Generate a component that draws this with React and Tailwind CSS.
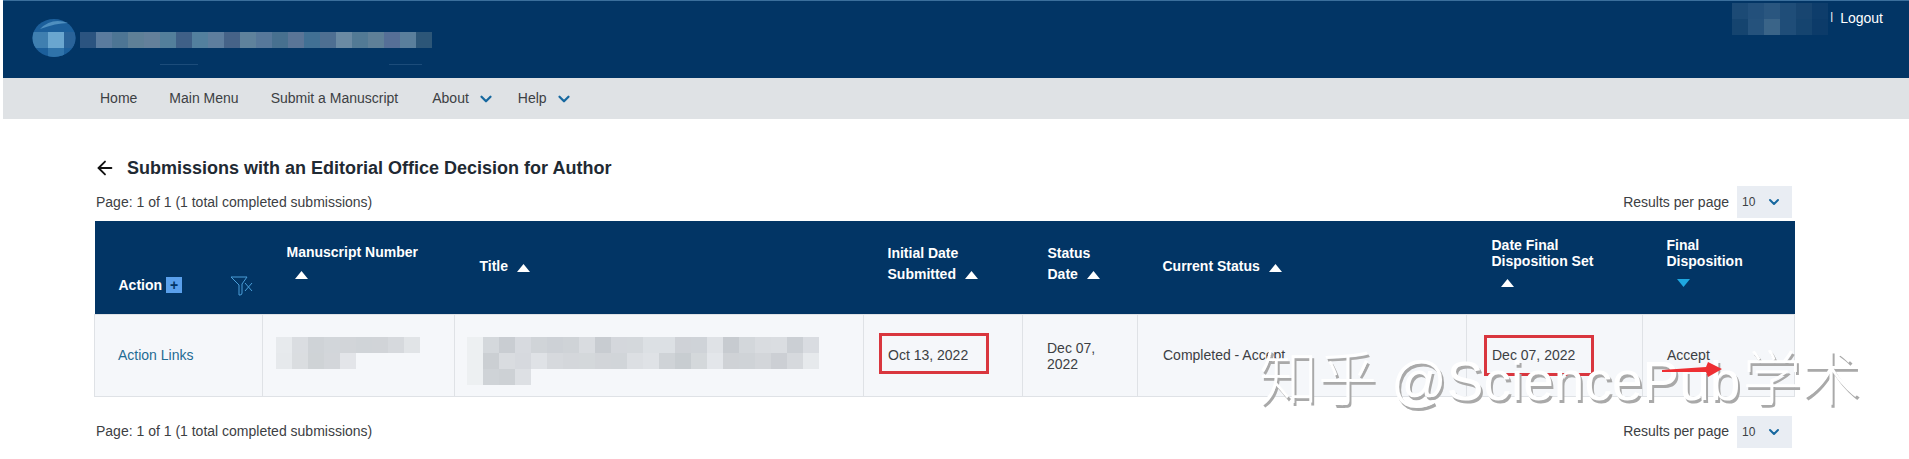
import { ArrowLeft, ChevronDown } from 'lucide-react';

const LOGO_BAR = ['#3f7fb0', '#6aa6cf', '#2a6399', '#2b5480', '#5a7b9e', '#4d7594', '#5f8097', '#64809a', '#537f9b', '#3f6087', '#53809e', '#5e7e9e', '#466388', '#5f829c', '#57789a', '#47708f', '#5a7597', '#417094', '#4e6f92', '#6a8aa3', '#527a95', '#5f8098', '#566f97', '#5a7f9c', '#2c5678'];
const USER_BLUR = [
  ['#1c4a75', '#23507b', '#2a567f', '#1f4d78', '#184570', '#0e3d6b'],
  ['#15446f', '#25527c', '#3a6488', '#1f4d78', '#15446f', '#0c3b69'],
];
const NUMBER_BLUR = [
  ['#e7eaed', '#dadde1', '#cfd3d7', '#d2d6da', '#d2d5d9', '#d0d4d8', '#d1d4d8', '#d6d9dd', '#e1e4e7'],
  ['#e6e9ec', '#dadde0', '#cfd3d6', '#d3d6da', '#e3e5e9'],
];
const TITLE_BLUR = [
  ['#edf0f2', '#d4d8dc', '#c9cdd2', '#d7dadf', '#d0d4d8', '#cdd1d6', '#cfd3d7', '#d9dce0', '#c8ccd1', '#d4d7dc', '#d4d8dc', '#dce0e4', '#dce0e4', '#cfd2d7', '#cfd3d8', '#dfe2e6', '#c7cbd0', '#d3d7db', '#d9dce0', '#dadde1', '#cbcfd4', '#d9dce1'],
  ['#edf0f2', '#cbcfd3', '#d9dce0', '#d6d9de', '#dfe2e6', '#d6d9dd', '#d4d7db', '#d4d8db', '#d2d5d9', '#d1d5d9', '#dcdfe3', '#dfe2e6', '#cfd3d7', '#c8cdd1', '#d4d8db', '#e3e6ea', '#cfd2d6', '#cfd3d7', '#d3d6da', '#cccfd4', '#d6d9dd', '#e6e9ec'],
  ['#edf0f2', '#cfd3d7', '#cdd1d5', '#dde0e4'],
];

// pixelated (censored) areas of the screenshot
function Mosaic({ rows, cell = 16 }) {
  const cols = Math.max(...rows.map((r) => r.length));
  return (
    <svg width={cols * cell} height={rows.length * cell} className="block">
      {rows.map((row, y) => row.map((c, x) => <rect key={x} x={x * cell} y={y * cell} width={cell} height={cell} fill={c} />))}
    </svg>
  );
}

function Logo() {
  return (
    <svg width="410" height="50" className="block">
      <defs>
        <clipPath id="globe"><ellipse cx="22" cy="19" rx="21.5" ry="19" /></clipPath>
      </defs>
      <ellipse cx="22" cy="19" rx="21.5" ry="19" fill="#1c5f9b" />
      <path d="M8 10 Q20 -2 36 4 Q24 4 8 10" fill="#4f8fbf" />
      <g clipPath="url(#globe)">
        <rect x="16" y="29" width="16" height="9" fill="#2f73aa" />
        {LOGO_BAR.slice(0, 3).map((c, i) => <rect key={i} x={i * 16} y="13" width="16" height="16" fill={c} />)}
      </g>
      {LOGO_BAR.slice(3).map((c, i) => <rect key={i} x={(i + 3) * 16} y="13" width="16" height="16" fill={c} />)}
      <rect x="128" y="45" width="38" height="1" fill="#1c4c7a" />
      <rect x="357" y="45" width="33" height="1" fill="#1c4c7a" />
    </svg>
  );
}

function Sort({ down }) {
  return (
    <svg width="13" height="8" viewBox="0 0 13 8" className="inline-block">
      {down
        ? <polygon points="0,0 13,0 6.5,8" fill="#1ea7e0" />
        : <polygon points="6.5,0 13,8 0,8" fill="#ffffff" />}
    </svg>
  );
}

function FilterClear() {
  return (
    <svg width="24" height="20" viewBox="0 0 24 20" fill="none" stroke="#4a9ed8" strokeWidth="1" className="block">
      <path d="M1 1 H17 L12 8 V17 Q12 19 10 19 H9 V9 Z" />
      <path d="M15 7 L22 15 M22 7 L15 15" />
    </svg>
  );
}

function PageRow() {
  return (
    <div className="flex items-center justify-between text-[14px] text-[#3c4043]">
      <span className="pl-[2px]">Page: 1 of 1 (1 total completed submissions)</span>
      <div className="flex items-center">
        <span>Results per page</span>
        <div className="ml-2 mr-[2px] flex h-8 w-[55px] items-center bg-[#e9edf3] pl-[5px]">
          <span className="text-[12px]">10</span>
          <ChevronDown size={16} strokeWidth={3} className="ml-[11px] text-[#17689f]" />
        </div>
      </div>
    </div>
  );
}

export default function App() {
  return (
    <div className="relative h-[459px] w-[1909px] overflow-hidden bg-white pl-[3px] font-['Liberation_Sans',sans-serif]">
      {/* Top banner */}
      <div className="flex h-[78px] items-start justify-between border-t border-[#3b6f9c] bg-[#023565]">
        <div className="ml-[29px] mt-[18px]"><Logo /></div>
        <div className="mr-[26px] mt-[2px] flex items-start text-[14px] text-white">
          <Mosaic rows={USER_BLUR} cell={16} />
          <span className="ml-[2px] mt-[5px] text-[11px]">|</span>
          <span className="ml-[7px] mt-[5px]">Logout</span>
        </div>
      </div>

      {/* Nav */}
      <div className="flex h-[41px] items-center bg-[#dfe2e5] pl-[97px] text-[14px] text-[#3c4043]">
        <span>Home</span>
        <span className="ml-8">Main Menu</span>
        <span className="ml-[32px]">Submit a Manuscript</span>
        <span className="ml-[34px]">About</span>
        <ChevronDown size={18} strokeWidth={3} className="ml-[8px] text-[#17689f]" />
        <span className="ml-[23px]">Help</span>
        <ChevronDown size={18} strokeWidth={3} className="ml-[8px] text-[#17689f]" />
      </div>

      {/* Content */}
      <div className="ml-[91px] w-[1700px]">
        <div className="mt-[38px] flex h-[22px] items-center">
          <ArrowLeft size={22} strokeWidth={2} className="text-[#111]" />
          <h1 className="ml-[11px] text-[18px] font-bold text-[#1f2a33]">Submissions with an Editorial Office Decision for Author</h1>
        </div>

        <div className="mt-[7px]"><PageRow /></div>

        <table className="mt-[3px] w-[1700px] table-fixed border-collapse text-[14px] text-[#3c4043]">
          <colgroup>
            <col className="w-[168px]" />
            <col className="w-[192px]" />
            <col className="w-[409px]" />
            <col className="w-[159px]" />
            <col className="w-[115px]" />
            <col className="w-[329px]" />
            <col className="w-[176px]" />
            <col className="w-[152px]" />
          </colgroup>
          <thead>
            <tr className="h-[93px] bg-[#023565] text-left text-[14px] font-bold text-white">
              <th className="pb-[18px] pl-6 align-bottom">
                <div className="flex items-end justify-between pr-[9px]">
                  <div className="flex items-center">
                    Action
                    <span className="ml-[4px] flex h-4 w-4 items-center justify-center bg-[#5aa0ec] text-[14px] leading-none text-[#023565]">+</span>
                  </div>
                  <FilterClear />
                </div>
              </th>
              <th className="pl-6 pb-[12px] align-middle">
                <div>Manuscript Number</div>
                <div className="mt-[3px] pl-[8px] leading-none"><Sort /></div>
              </th>
              <th className="pl-[25px] pb-[1px]">Title <span className="ml-[5px]"><Sort /></span></th>
              <th className="pl-[24px] pb-[7px] leading-[21px]">Initial Date<br />Submitted <span className="ml-[5px]"><Sort /></span></th>
              <th className="pl-[25px] pb-[7px] leading-[21px]">Status<br />Date <span className="ml-[5px]"><Sort /></span></th>
              <th className="pl-[25px] pb-[1px]">Current Status <span className="ml-[5px]"><Sort /></span></th>
              <th className="pl-[25px] pb-[9px] leading-[16px]">
                Date Final<br />Disposition Set
                <div className="mt-[6px] pl-[9px] leading-none"><Sort /></div>
              </th>
              <th className="pl-[24px] pb-[9px] leading-[16px]">
                Final<br />Disposition
                <div className="mt-[6px] pl-[10px] leading-none"><Sort down /></div>
              </th>
            </tr>
          </thead>
          <tbody>
            <tr className="h-[82px] bg-[#f5f7fa]">
              <td className="border border-[#dfe2e6] pl-[23px] text-[#1f6b93]">Action Links</td>
              <td className="border border-[#dfe2e6] pl-[13px] align-top pt-[22px]"><Mosaic rows={NUMBER_BLUR} /></td>
              <td className="border border-[#dfe2e6] pl-[12px] align-top pt-[22px]"><Mosaic rows={TITLE_BLUR} /></td>
              <td className="border border-[#dfe2e6] pl-[24px]">Oct 13, 2022</td>
              <td className="border border-[#dfe2e6] pl-[24px] pr-[30px] pt-[2px] leading-[16px]">Dec 07, 2022</td>
              <td className="border border-[#dfe2e6] pl-[25px]">Completed - Accept</td>
              <td className="border border-[#dfe2e6] pl-[25px]">Dec 07, 2022</td>
              <td className="border border-[#dfe2e6] pl-[24px]">Accept</td>
            </tr>
          </tbody>
        </table>

        <div className="mt-[19px]"><PageRow /></div>
      </div>

      {/* Annotations drawn over the screenshot */}
      <div className="absolute left-[879px] top-[333px] h-[41px] w-[110px] border-[3px] border-[#d9363e]" />
      <div className="absolute left-[1484px] top-[335px] h-[41px] w-[110px] border-[3px] border-[#d9363e]" />

      {/* Watermark */}
      <div className="absolute left-[1259px] top-[345px] whitespace-nowrap font-light leading-[70px] text-white [font-family:'Liberation_Sans','Noto_Sans_CJK_SC',sans-serif] [text-shadow:2px_3px_0_#a9a9a9]">
        <span className="text-[59px]">知乎</span>
        <span className="ml-[14px] text-[55px]">@SciencePub</span>
        <span className="ml-[2px] text-[59px]">学术</span>
      </div>

      <svg width="62" height="20" className="absolute left-[1662px] top-[360px]">
        <polygon points="0,10 44,7 46,2 60,9 46,17 44,12 0,12" fill="#ee2f33" />
      </svg>
    </div>
  );
}
